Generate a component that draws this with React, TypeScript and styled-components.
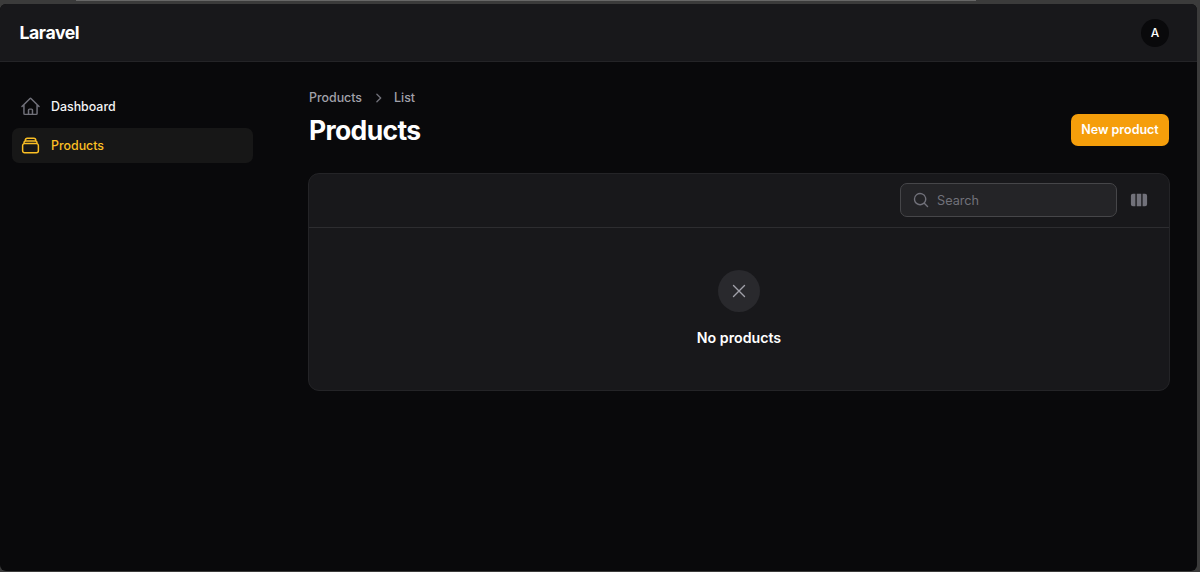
import React from 'react';
import styled, { createGlobalStyle } from 'styled-components';
import {
  HiOutlineHome,
  HiOutlineRectangleStack,
  HiOutlineXMark,
  HiMiniChevronRight,
  HiMiniMagnifyingGlass,
  HiMiniViewColumns,
} from 'react-icons/hi2';

const GlobalStyle = createGlobalStyle`
  *, *::before, *::after { box-sizing: border-box; }
  body { margin: 0; background: #3b3b3b; font-family: Inter, sans-serif; color: #fff; }
  button, input { font: inherit; border: 0; }
  h1, h2, ul, ol { margin: 0; padding: 0; list-style: none; }
  svg { display: block; flex: none; }
`;

const Frame = styled.div`
  height: 572px;
  padding: 0 3px 1px 0;
  display: flex;
  flex-direction: column;
  overflow: hidden;
`;

const BrowserEdge = styled.div`
  height: 4px;
  flex: none;
  padding-left: 76px;

  &::before {
    content: '';
    display: block;
    width: 900px;
    height: 1px;
    background: #676767;
  }
`;

const Panel = styled.div`
  flex: 1;
  display: flex;
  flex-direction: column;
  border-radius: 6px;
  overflow: hidden;
  background: #09090b;
`;

const Topbar = styled.header`
  height: 58px;
  flex: none;
  display: flex;
  align-items: center;
  justify-content: space-between;
  padding: 0 28px 0 19.5px;
  background: #18181b;
  border-bottom: 1px solid #242427;
`;

const Brand = styled.div`
  font-size: 17.7px;
  line-height: 24px;
  font-weight: 700;
  letter-spacing: -0.45px;
`;

const Avatar = styled.div`
  width: 28px;
  height: 28px;
  border-radius: 50%;
  display: grid;
  place-items: center;
  background: #09090b;
  font-size: 12px;
  font-weight: 500;
`;

const Body = styled.div`
  flex: 1;
  display: flex;
`;

const Sidebar = styled.nav`
  width: 265px;
  flex: none;
  padding: 27px 12px 0;
`;

const NavList = styled.ul`
  display: flex;
  flex-direction: column;
  gap: 4px;
`;

const NavItem = styled.li<{ $active?: boolean }>`
  height: 35px;
  display: flex;
  align-items: center;
  gap: 10.5px;
  padding: 0 7.5px;
  border-radius: 7px;
  font-size: 12.4px;
  line-height: 18px;
  font-weight: 500;
  color: ${({ $active }) => ($active ? '#fbbf24' : '#f4f4f5')};
  background: ${({ $active }) => ($active ? '#171717' : 'transparent')};

  svg {
    width: 21px;
    height: 21px;
    color: ${({ $active }) => ($active ? '#fbbf24' : '#71717a')};
    stroke-width: 1.7;
  }
`;

const Main = styled.main`
  flex: 1;
  padding: 27px 27px 0 43px;
`;

const PageHeader = styled.div`
  display: flex;
  align-items: center;
  justify-content: space-between;
  padding: 0 1px;
`;

const Breadcrumbs = styled.ol`
  display: flex;
  align-items: center;
  gap: 7px;
  height: 18px;
  font-size: 12.4px;
  line-height: 18px;
  font-weight: 500;
  color: #a1a1aa;

  svg {
    width: 18px;
    height: 18px;
    color: #71717a;
  }
`;

const Title = styled.h1`
  margin-top: 7px;
  height: 32px;
  line-height: 32px;
  font-size: 26.5px;
  font-weight: 700;
  letter-spacing: -0.66px;
`;

const PrimaryButton = styled.button`
  margin-top: 24px;
  width: 98px;
  height: 32px;
  padding: 0;
  border-radius: 7px;
  background: #f59e0b;
  color: #fff;
  font-size: 12.5px;
  font-weight: 600;
  white-space: nowrap;
`;

const TableCard = styled.section`
  margin-top: 27px;
  height: 218px;
  display: flex;
  flex-direction: column;
  border: 1px solid #242427;
  border-radius: 11px;
  background: #18181b;
`;

const Toolbar = styled.div`
  height: 54px;
  flex: none;
  display: flex;
  align-items: center;
  justify-content: flex-end;
  gap: 13px;
  padding: 0 21px 1px 0;
  border-bottom: 1px solid #2d2d30;

  > svg {
    width: 18px;
    height: 18px;
    color: #71717a;
  }
`;

const SearchField = styled.label`
  width: 217px;
  height: 34px;
  display: flex;
  align-items: center;
  gap: 7px;
  padding: 0 11px;
  border: 1px solid #464649;
  border-radius: 7px;
  background: #242427;
  color: #71717a;

  svg {
    width: 18px;
    height: 18px;
  }

  input {
    width: 150px;
    padding: 0;
    background: transparent;
    font-size: 12.7px;
    color: #fff;
    outline: 0;
  }

  input::placeholder {
    color: #71717a;
    opacity: 1;
  }
`;

const EmptyState = styled.div`
  flex: 1;
  display: flex;
  flex-direction: column;
  align-items: center;
  padding-top: 42px;
`;

const EmptyIcon = styled.div`
  width: 42px;
  height: 42px;
  border-radius: 50%;
  display: grid;
  place-items: center;
  background: #29292d;
  color: #a1a1aa;

  svg {
    width: 22px;
    height: 22px;
  }
`;

const EmptyHeading = styled.h2`
  margin-top: 15px;
  font-size: 14.2px;
  line-height: 21px;
  font-weight: 600;
`;

export default function App() {
  return (
    <>
      <GlobalStyle />
      <Frame>
        <BrowserEdge />
        <Panel>
          <Topbar>
            <Brand>Laravel</Brand>
            <Avatar>A</Avatar>
          </Topbar>
          <Body>
            <Sidebar>
              <NavList>
                <NavItem>
                  <HiOutlineHome />
                  Dashboard
                </NavItem>
                <NavItem $active>
                  <HiOutlineRectangleStack />
                  Products
                </NavItem>
              </NavList>
            </Sidebar>
            <Main>
              <PageHeader>
                <div>
                  <Breadcrumbs>
                    <li>Products</li>
                    <HiMiniChevronRight />
                    <li>List</li>
                  </Breadcrumbs>
                  <Title>Products</Title>
                </div>
                <PrimaryButton type="button">New product</PrimaryButton>
              </PageHeader>
              <TableCard>
                <Toolbar>
                  <SearchField>
                    <HiMiniMagnifyingGlass />
                    <input type="search" placeholder="Search" />
                  </SearchField>
                  <HiMiniViewColumns />
                </Toolbar>
                <EmptyState>
                  <EmptyIcon>
                    <HiOutlineXMark />
                  </EmptyIcon>
                  <EmptyHeading>No products</EmptyHeading>
                </EmptyState>
              </TableCard>
            </Main>
          </Body>
        </Panel>
      </Frame>
    </>
  );
}
